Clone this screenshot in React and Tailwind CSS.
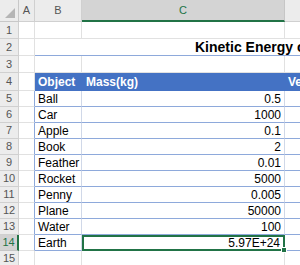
const rows = [
  ['Ball', '0.5'],
  ['Car', '1000'],
  ['Apple', '0.1'],
  ['Book', '2'],
  ['Feather', '0.01'],
  ['Rocket', '5000'],
  ['Penny', '0.005'],
  ['Plane', '50000'],
  ['Water', '100'],
  ['Earth', '5.97E+24'],
]

const font = { fontFamily: '"Liberation Sans", Arial, sans-serif' }

function RowHead({ n, selected }) {
  return (
    <div
      className={`flex w-[19px] shrink-0 items-center justify-center border-b border-r text-[11px] ${
        selected ? 'border-b-[#c6c6c6] border-r-[#217346] border-r-2 bg-[#d2d2d2] text-[#217346]' : 'border-[#d0d0d0] bg-[#ececec] text-[#555]'
      }`}
    >
      {n}
    </div>
  )
}

export default function App() {
  return (
    <div className="h-[265px] w-[300px] overflow-hidden bg-white text-black" style={font}>
      {/* column headers */}
      <div className="flex h-[22px]">
        <div className="relative w-[19px] shrink-0 border-b border-r border-[#c8c8c8] bg-[#ececec]">
          <div className="absolute bottom-[3px] right-[3px] h-0 w-0 border-b-[10px] border-l-[10px] border-b-[#b5b5b5] border-l-transparent" />
        </div>
        <div className="flex w-[16px] shrink-0 items-center justify-center border-b border-r border-[#d0d0d0] bg-[#ececec] text-[11px] text-[#555]">A</div>
        <div className="flex w-[47px] shrink-0 items-center justify-center border-b border-r border-[#d0d0d0] bg-[#ececec] text-[11px] text-[#555]">B</div>
        <div className="flex w-[203px] shrink-0 items-center justify-center border-b-2 border-r border-b-[#217346] border-r-[#c6c6c6] bg-[#d4d4d4] text-[11px] text-[#217346]">C</div>
        <div className="flex flex-1 items-center justify-center border-b border-[#d0d0d0] bg-[#ececec] text-[11px] text-[#555]" />
      </div>

      {/* row 1 */}
      <div className="flex h-[17px]">
        <RowHead n={1} />
        <div className="w-[16px] shrink-0 border-b border-r border-[#e1e1e1]" />
        <div className="w-[47px] shrink-0 border-b border-r border-[#e1e1e1]" />
        <div className="w-[203px] shrink-0 border-b border-r border-[#e1e1e1]" />
        <div className="flex-1 border-b border-[#e1e1e1]" />
      </div>

      {/* row 2: title */}
      <div className="flex h-[17px]">
        <RowHead n={2} />
        <div className="w-[16px] shrink-0 border-b border-r border-[#e1e1e1]" />
        <div className="flex flex-1 items-center overflow-hidden whitespace-nowrap border-b border-[#8ea9db] pl-[160px] text-[14px] font-bold leading-none">
          Kinetic Energy of Objects
        </div>
      </div>

      {/* row 3 */}
      <div className="flex h-[17px]">
        <RowHead n={3} />
        <div className="w-[16px] shrink-0 border-b border-r border-[#e1e1e1]" />
        <div className="w-[47px] shrink-0 border-b border-r border-[#e1e1e1]" />
        <div className="w-[203px] shrink-0 border-b border-r border-[#e1e1e1]" />
        <div className="flex-1 border-b border-[#e1e1e1]" />
      </div>

      {/* row 4: table header */}
      <div className="flex h-[18px]">
        <RowHead n={4} />
        <div className="w-[16px] shrink-0 border-b border-r border-[#e1e1e1]" />
        <div className="flex flex-1 items-center bg-[#4472c4] text-[12px] font-bold leading-none text-white">
          <div className="w-[47px] shrink-0 pl-[3px]">Object</div>
          <div className="w-[203px] shrink-0 pl-[4px]">Mass(kg)</div>
          <div className="flex-1 overflow-hidden whitespace-nowrap pl-[3px]">Velocity</div>
        </div>
      </div>

      {rows.map(([name, mass], i) => {
        const n = i + 5
        const sel = n === 14
        return (
          <div key={n} className="flex h-[16px]">
            <RowHead n={n} selected={sel} />
            <div className="w-[16px] shrink-0 border-b border-r border-b-[#e1e1e1] border-r-[#8ea9db]" />
            <div className="flex w-[47px] shrink-0 items-center border-b border-r border-b-[#8ea9db] border-r-[#d0d8e8] pl-[3px] text-[12px] leading-none">
              {name}
            </div>
            <div
              className={`relative flex w-[203px] shrink-0 items-center justify-end pr-[3px] text-[12px] leading-none ${
                sel ? 'border-2 border-[#217346]' : 'border-b border-r border-b-[#8ea9db] border-r-[#d0d8e8]'
              }`}
            >
              {mass}
              {sel && <div className="absolute -bottom-[4px] -right-[4px] h-[6px] w-[6px] border border-white bg-[#217346]" />}
            </div>
            <div className="flex-1 border-b border-[#8ea9db]" />
          </div>
        )
      })}

      {/* row 15 */}
      <div className="flex h-[16px]">
        <RowHead n={15} />
        <div className="w-[16px] shrink-0 border-b border-r border-[#e1e1e1]" />
        <div className="w-[47px] shrink-0 border-b border-r border-[#e1e1e1]" />
        <div className="w-[203px] shrink-0 border-b border-r border-[#e1e1e1]" />
        <div className="flex-1 border-b border-[#e1e1e1]" />
      </div>
    </div>
  )
}
